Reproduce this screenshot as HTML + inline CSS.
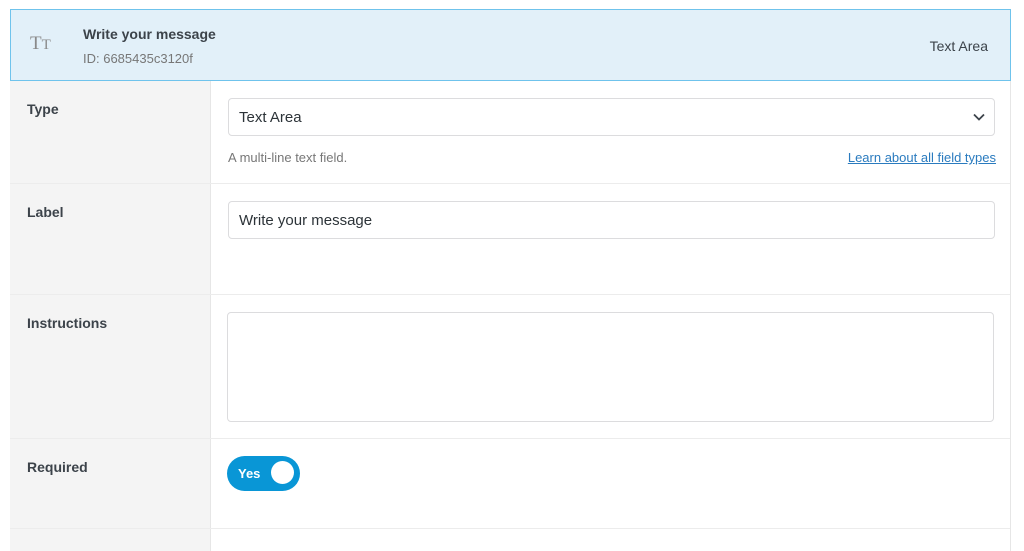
<!DOCTYPE html>
<html><head><style>
body{margin:0;background:#fff;font-family:"Liberation Sans",sans-serif;width:1024px;height:542px;overflow:hidden;position:relative}
.a{position:absolute}
.hdr{left:10px;top:9px;width:999px;height:70px;background:#e2f0f9;border:1px solid #6fc3ec;}
.left{left:10px;top:81px;width:200px;height:470px;background:#f4f4f4;border-right:1px solid #e6e6e6}
.rb{left:1010px;top:81px;width:1px;height:470px;background:#e6e6e6}
.div{left:10px;width:1000px;height:1px;background:#ececec}
.lbl{left:27px;font-size:14px;font-weight:bold;color:#3c434a}
.inp{border:1px solid #dcdcde;border-radius:4px;background:#fff;box-sizing:border-box;font-size:15px;color:#2c3338;padding-left:10px}
</style></head><body>
<div class="a hdr"></div>
<div class="a" style="left:30px;top:33px;font-family:'Liberation Serif',serif;font-size:19px;color:#8a8a8a">T<span style="font-size:15px">T</span></div>
<div class="a" style="left:83px;top:26px;font-size:14px;font-weight:bold;color:#3c434a">Write your message</div>
<div class="a" style="left:83px;top:51px;font-size:13px;color:#777">ID: 6685435c3120f</div>
<div class="a" style="right:36px;top:38px;font-size:14px;color:#3c434a">Text Area</div>
<div class="a left"></div><div class="a rb"></div>
<div class="a div" style="top:183px"></div>
<div class="a div" style="top:294px"></div>
<div class="a div" style="top:438px"></div>
<div class="a div" style="top:528px"></div>
<div class="a lbl" style="top:101px">Type</div>
<div class="a lbl" style="top:204px">Label</div>
<div class="a lbl" style="top:315px">Instructions</div>
<div class="a lbl" style="top:459px">Required</div>
<div class="a inp" style="left:228px;top:98px;width:767px;height:38px;line-height:38px">Text Area
<svg class="a" style="right:9px;top:14px" width="12" height="8" viewBox="0 0 12 8"><path d="M1 1.5l5 5 5-5" stroke="#3c434a" stroke-width="1.8" fill="none"/></svg></div>
<div class="a" style="left:228px;top:150px;font-size:13px;color:#777">A multi-line text field.</div>
<div class="a" style="right:28px;top:150px;font-size:13px;color:#2a7bbf;text-decoration:underline">Learn about all field types</div>
<div class="a inp" style="left:228px;top:201px;width:767px;height:38px;line-height:38px">Write your message</div>
<div class="a inp" style="left:227px;top:312px;width:767px;height:110px"></div>
<div class="a" style="left:227px;top:456px;width:73px;height:35px;border-radius:18px;background:#0996d6"></div>
<div class="a" style="left:238px;top:466px;font-size:13px;font-weight:bold;color:#fff">Yes</div>
<div class="a" style="left:271px;top:461px;width:23px;height:23px;border-radius:50%;background:#fff"></div>
</body></html>
